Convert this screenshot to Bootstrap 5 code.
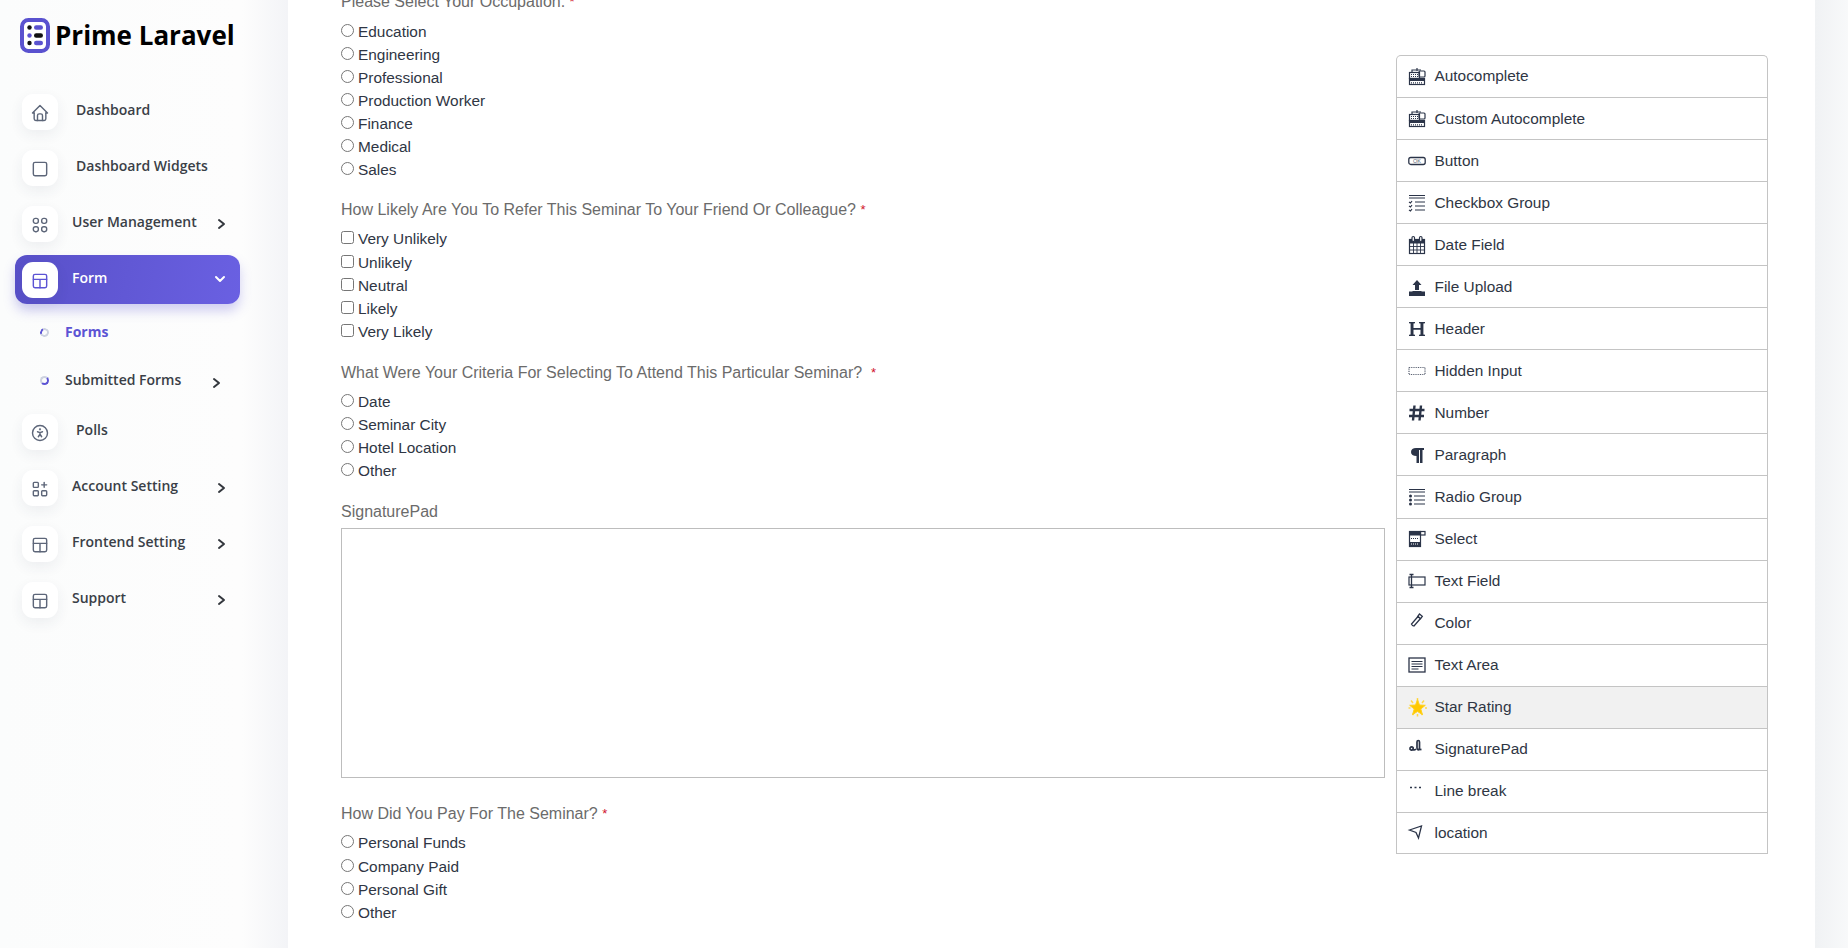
<!DOCTYPE html>
<html lang="en"><head><meta charset="utf-8"><title>Form Builder</title>
<link rel="stylesheet" href="https://cdn.jsdelivr.net/npm/bootstrap@5.3.0/dist/css/bootstrap.min.css">
<style>
html,body{height:948px;overflow:hidden;background:#f8f9fa}
.shell{height:948px;overflow:hidden}
.side{width:288px;flex:none;background:linear-gradient(to right,#fbfcfc 0,#fdfdfd 84%,#f3f4f7 100%);font-family:"Open Sans",sans-serif;font-weight:600;font-size:14px;color:#3a3f47}
.logo-row{height:87px;padding:18px 0 0 20px;gap:4px;align-items:flex-start}
.logo-txt{font-weight:700;font-size:26px;line-height:35px;color:#000}
.nav-stack{padding:0 0 0 15px;width:240px}
.nav-it{height:49px;margin-bottom:7px;padding:0 14px 0 7px;border-radius:12px}
.nav-it.on{background:linear-gradient(100deg,#5850c8,#6a60e2);color:#fff;box-shadow:0 7px 12px rgba(94,85,211,.28)}
.ico-box{width:36px;height:36px;border-radius:11px;background:#fff;box-shadow:0 5px 14px rgba(40,50,80,.07);flex:none}
.ico-box svg{width:20px;height:20px;fill:none;stroke:#5d6679;stroke-width:1.7;stroke-linecap:round;stroke-linejoin:round;margin-top:2px}
.nav-it.on .ico-box svg{stroke:#5c54d4}
.lbl-a{margin-left:18px;padding-bottom:5px}
.lbl-b{margin-left:14px;padding-bottom:5px}
.chev{width:9px;height:12px;fill:none;stroke:#33373d;stroke-width:2;stroke-linecap:round;stroke-linejoin:round;margin-left:auto}
.on .chev{width:12px;height:9px;stroke:#fff}
.sub-it{height:48px;padding:0 19px 0 25px}
.sub-it .chev{margin-top:-1px}
.ring{width:9px;height:9px;border-radius:50%;border:2px solid #cdd2e0;margin-bottom:6px;margin-right:16px;flex:none}
.ring.r1{border-left-color:#5c54d4;transform:rotate(20deg)}
.ring.r2{border-bottom-color:#5c54d4;border-right-color:#5c54d4}
.sub-tx{padding-bottom:8px}
.sub-tx.act{color:#5c54d4;font-weight:700}
.mainp{width:1527px;flex:none;background:#fff;padding-left:53px;font-family:"Liberation Sans",sans-serif;font-size:15.4px;color:#2f3644;gap:11px}
.rstrip{flex:1 1 auto;background:linear-gradient(to right,#f0f2f4,#f8f9fa)}
.fcol{width:1044px;flex:none;margin-top:-10px}
.qh{font-size:16px;line-height:24px;color:#6b6b6b;margin-bottom:5px;white-space:nowrap}
.qh b{color:#d0142c;font-weight:400;font-size:13px;vertical-align:1px}
.qh.qh1{margin-bottom:6px}
.qh.tight{margin-bottom:4px}
.opts{margin-bottom:18px}
.opts.first{margin-bottom:17px}
.opt{height:23px;gap:4px;margin:0;align-items:center}
.opt input{margin:0 0 3px 0;flex:none}
.opts.wide .opt:first-child{height:24px}
.sigbox{height:250px;border:1px solid #bdbdbd;margin-bottom:24px;background:#fff}
.lcol{width:372px;margin-top:55px;flex:none}
.tool-list{border-radius:5px 5px 0 0}
.tool-list .tool.tool{height:42.05px;padding:0 0 0 11px;gap:8.5px;border:1px solid #c4c4c4;border-bottom-width:0;color:#2f3644;font-size:15.4px;align-items:center}
.tool-list .tool.tool:last-child{border-bottom-width:1px;border-radius:0}
.tool-list .tool.hl{background:#f1f1f1}
.tool svg{width:18px;height:20px;flex:none;fill:none;stroke:#2b3448;stroke-width:1.2;overflow:visible}
.tool svg .sol{fill:#2b3448;stroke:none}
.tool svg text{font-family:"Liberation Sans",sans-serif;font-size:5.5px;fill:#5b6272;stroke:none}
.tool span{padding-bottom:1px}
</style></head>
<body>
<div class="shell d-flex">
<aside class="side">
<div class="logo-row d-flex">
<svg width="31" height="35" viewBox="0 0 31 35"><rect x="2" y="2" width="26" height="31" rx="6.500" fill="#fff" stroke="#5a52cf" stroke-width="4"/><circle cx="9.500" cy="9.500" r="2.200" fill="#111"/><rect x="14" y="7.300" width="9" height="4.400" rx="2.200" fill="#5a52cf"/><circle cx="9.500" cy="17.500" r="2.200" fill="#5a52cf"/><rect x="14" y="15.300" width="9" height="4.400" rx="2.200" fill="#111"/><circle cx="9.500" cy="25" r="2.200" fill="#111"/><rect x="14" y="22.800" width="9" height="4.400" rx="2.200" fill="#5a52cf"/></svg>
<div class="logo-txt">Prime Laravel</div>
</div>
<div class="nav-stack">
<div class="nav-it d-flex align-items-center"><div class="ico-box d-flex align-items-center justify-content-center"><svg viewBox="0 0 24 24"><path d="M5 12H3l9-9 9 9h-2"/><path d="M5 12v7a2 2 0 0 0 2 2h10a2 2 0 0 0 2-2v-7"/><path d="M9 21v-6a2 2 0 0 1 2-2h2a2 2 0 0 1 2 2v6"/></svg></div><span class="lbl-a">Dashboard</span></div>
<div class="nav-it d-flex align-items-center"><div class="ico-box d-flex align-items-center justify-content-center"><svg viewBox="0 0 24 24"><rect x="4" y="4" width="16" height="16" rx="2"/></svg></div><span class="lbl-a">Dashboard Widgets</span></div>
<div class="nav-it d-flex align-items-center"><div class="ico-box d-flex align-items-center justify-content-center"><svg viewBox="0 0 24 24"><rect x="4" y="4" width="6" height="6" rx="2.500"/><rect x="14" y="4" width="6" height="6" rx="2.500"/><rect x="4" y="14" width="6" height="6" rx="2.500"/><rect x="14" y="14" width="6" height="6" rx="2.500"/></svg></div><span class="lbl-b">User Management</span><svg class="chev" viewBox="0 0 9 12"><path d="M2 2l5 4-5 4"/></svg></div>
<div class="nav-it on d-flex align-items-center"><div class="ico-box d-flex align-items-center justify-content-center"><svg viewBox="0 0 24 24"><rect x="4" y="4" width="16" height="16" rx="2"/><path d="M4 10h16M12 10v10"/></svg></div><span class="lbl-b">Form</span><svg class="chev" viewBox="0 0 12 9"><path d="M2 2l4 4 4-4"/></svg></div>
<div class="sub-it d-flex align-items-center"><i class="ring r1"></i><span class="sub-tx act">Forms</span></div>
<div class="sub-it d-flex align-items-center"><i class="ring r2"></i><span class="sub-tx">Submitted Forms</span><svg class="chev" viewBox="0 0 9 12"><path d="M2 2l5 4-5 4"/></svg></div>
<div class="nav-it d-flex align-items-center"><div class="ico-box d-flex align-items-center justify-content-center"><svg viewBox="0 0 24 24"><circle cx="12" cy="12" r="9"/><path d="M10 16.500l2-3 2 3m-2-3v-2l3-1m-6 0l3 1"/><circle cx="12" cy="7.500" r=".5"/></svg></div><span class="lbl-a">Polls</span></div>
<div class="nav-it d-flex align-items-center"><div class="ico-box d-flex align-items-center justify-content-center"><svg viewBox="0 0 24 24"><rect x="4" y="4" width="6" height="6" rx="1"/><rect x="4" y="14" width="6" height="6" rx="1"/><rect x="14" y="14" width="6" height="6" rx="1"/><path d="M14 7h6M17 4v6"/></svg></div><span class="lbl-b">Account Setting</span><svg class="chev" viewBox="0 0 9 12"><path d="M2 2l5 4-5 4"/></svg></div>
<div class="nav-it d-flex align-items-center"><div class="ico-box d-flex align-items-center justify-content-center"><svg viewBox="0 0 24 24"><rect x="4" y="4" width="16" height="16" rx="2"/><path d="M4 10h16M12 10v10"/></svg></div><span class="lbl-b">Frontend Setting</span><svg class="chev" viewBox="0 0 9 12"><path d="M2 2l5 4-5 4"/></svg></div>
<div class="nav-it d-flex align-items-center"><div class="ico-box d-flex align-items-center justify-content-center"><svg viewBox="0 0 24 24"><rect x="4" y="4" width="16" height="16" rx="2"/><path d="M4 10h16M12 10v10"/></svg></div><span class="lbl-b">Support</span><svg class="chev" viewBox="0 0 9 12"><path d="M2 2l5 4-5 4"/></svg></div>
</div>
</aside>
<main class="mainp d-flex align-items-start">
<form class="fcol">
<div class="qh qh1">Please Select Your Occupation. <b>*</b></div>
<div class="opts first">
<label class="opt d-flex"><input type="radio" name="a">Education</label>
<label class="opt d-flex"><input type="radio" name="a">Engineering</label>
<label class="opt d-flex"><input type="radio" name="a">Professional</label>
<label class="opt d-flex"><input type="radio" name="a">Production Worker</label>
<label class="opt d-flex"><input type="radio" name="a">Finance</label>
<label class="opt d-flex"><input type="radio" name="a">Medical</label>
<label class="opt d-flex"><input type="radio" name="a">Sales</label>
</div>
<div class="qh">How Likely Are You To Refer This Seminar To Your Friend Or Colleague? <b>*</b></div>
<div class="opts wide">
<label class="opt d-flex"><input type="checkbox">Very Unlikely</label>
<label class="opt d-flex"><input type="checkbox">Unlikely</label>
<label class="opt d-flex"><input type="checkbox">Neutral</label>
<label class="opt d-flex"><input type="checkbox">Likely</label>
<label class="opt d-flex"><input type="checkbox">Very Likely</label>
</div>
<div class="qh">What Were Your Criteria For Selecting To Attend This Particular Seminar? &nbsp;<b>*</b></div>
<div class="opts">
<label class="opt d-flex"><input type="radio" name="c">Date</label>
<label class="opt d-flex"><input type="radio" name="c">Seminar City</label>
<label class="opt d-flex"><input type="radio" name="c">Hotel Location</label>
<label class="opt d-flex"><input type="radio" name="c">Other</label>
</div>
<div class="qh tight">SignaturePad</div>
<div class="sigbox"></div>
<div class="qh">How Did You Pay For The Seminar? <b>*</b></div>
<div class="opts wide">
<label class="opt d-flex"><input type="radio" name="d">Personal Funds</label>
<label class="opt d-flex"><input type="radio" name="d">Company Paid</label>
<label class="opt d-flex"><input type="radio" name="d">Personal Gift</label>
<label class="opt d-flex"><input type="radio" name="d">Other</label>
</div>
</form>
<div class="lcol">
<ul class="list-group tool-list">
<li class="list-group-item tool d-flex"><svg viewBox="0 0 18 20"><rect x="1.500" y="5.500" width="10" height="6"/><path d="M4 5V3h9M9 1v3"/><rect x="11" y="4" width="6" height="6" rx="1"/><rect x="1.500" y="11.500" width="15" height="6"/><rect class="sol" x="1" y="11" width="16" height="3"/><path d="M3 15.800h12" stroke-dasharray="1 1"/><path d="M3 7.500h7M3 9.500h7" stroke-dasharray="1 1"/></svg><span>Autocomplete</span></li>
<li class="list-group-item tool d-flex"><svg viewBox="0 0 18 20"><rect x="1.500" y="5.500" width="10" height="6"/><path d="M4 5V3h9M9 1v3"/><rect x="11" y="4" width="6" height="6" rx="1"/><rect x="1.500" y="11.500" width="15" height="6"/><rect class="sol" x="1" y="11" width="16" height="3"/><path d="M3 15.800h12" stroke-dasharray="1 1"/><path d="M3 7.500h7M3 9.500h7" stroke-dasharray="1 1"/></svg><span>Custom Autocomplete</span></li>
<li class="list-group-item tool d-flex"><svg viewBox="0 0 18 20"><rect x=".8" y="6.500" width="16.400" height="7" rx="2" stroke-width="1.300"/><text x="5" y="12">OK</text></svg><span>Button</span></li>
<li class="list-group-item tool d-flex"><svg viewBox="0 0 18 20"><path d="M1 2.500h16M1 5h16M7 9h10M7 13h10M7 17h10"/><path d="M1 9l1.500 1L4 8M1 13l1.500 1L4 12M1 17l1.500 1L4 16"/></svg><span>Checkbox Group</span></li>
<li class="list-group-item tool d-flex"><svg viewBox="0 0 18 20"><rect x="1.500" y="4.500" width="15" height="14"/><path class="sol" d="M1.500 4.500h15v4h-15z"/><path d="M1.500 11.500h15M1.500 15h15M5.500 8v10M9 8v10M12.500 8v10" stroke-width=".9"/><rect x="4" y="1.500" width="2.500" height="5" rx="1.200" fill="#fff"/><rect x="11.500" y="1.500" width="2.500" height="5" rx="1.200" fill="#fff"/></svg><span>Date Field</span></li>
<li class="list-group-item tool d-flex"><svg viewBox="0 0 18 20"><path class="sol" d="M9 3l4.500 5H11v5H7V8H4.500zM1 14.500h3.500V14h9v.5H17V19H1z"/></svg><span>File Upload</span></li>
<li class="list-group-item tool d-flex"><svg viewBox="0 0 18 20"><path class="sol" d="M1 3h6v1.200L5.500 4.600v4.300h7V4.600L11 4.200V3h6v1.200l-1.600.4v10.800l1.600.4V17h-6v-1.200l1.500-.4v-4.700h-7v4.700l1.500.4V17H1v-1.200l1.600-.4V4.600L1 4.200z"/></svg><span>Header</span></li>
<li class="list-group-item tool d-flex"><svg viewBox="0 0 18 20"><rect x="1" y="6.500" width="16" height="7" stroke="#5b6272" stroke-dasharray="1 .8"/></svg><span>Hidden Input</span></li>
<li class="list-group-item tool d-flex"><svg viewBox="0 0 18 20"><path d="M6.500 2.500L5 17.500M13 2.500l-1.500 15M1.500 7h15M1 13h15" stroke-width="2.400"/></svg><span>Number</span></li>
<li class="list-group-item tool d-flex"><svg viewBox="0 0 18 20"><path class="sol" d="M8 3h8v2h-1.500v13H12V5h-1v13H8.500v-7C5 11 3 9.500 3 7s2-4 5-4z"/></svg><span>Paragraph</span></li>
<li class="list-group-item tool d-flex"><svg viewBox="0 0 18 20"><path d="M1 2.500h16M1 5h16M6 9h11M6 13h11M6 17h11"/><circle class="sol" cx="2.500" cy="9" r="1.500"/><circle class="sol" cx="2.500" cy="13" r="1.500"/><circle class="sol" cx="2.500" cy="17" r="1.500"/></svg><span>Radio Group</span></li>
<li class="list-group-item tool d-flex"><svg viewBox="0 0 18 20"><rect x="1.500" y="2.500" width="11" height="15"/><rect x="12.500" y="2.500" width="4.500" height="3.500"/><rect class="sol" x="1.500" y="2.500" width="11" height="4"/><rect class="sol" x="1.500" y="13" width="11" height="4.500"/><path d="M3 9.500h8" stroke-dasharray="1 1"/><path d="M3 15h8" stroke="#fff" stroke-dasharray="1 1"/></svg><span>Select</span></li>
<li class="list-group-item tool d-flex"><svg viewBox="0 0 18 20"><rect x="1" y="6" width="16" height="8"/><path d="M1.500 3.500h4M3.500 3.500v13M1.500 16.500h4" stroke-width="1.300"/></svg><span>Text Field</span></li>
<li class="list-group-item tool d-flex"><svg viewBox="0 0 18 20"><path d="M3.500 14.500l-1-1.500 6.500-7.500 2.500 2-6.500 7.500zM10.500 3l2.800 2.300-1.800 2.500-2.800-2.300z" stroke-width="1.300" transform="translate(1 -2)"/></svg><span>Color</span></li>
<li class="list-group-item tool d-flex"><svg viewBox="0 0 18 20"><rect x="1" y="3" width="16" height="14" stroke-width="1.300"/><path d="M3.500 6.500h11M3.500 9h11M3.500 11.500h11M3.500 14h7"/></svg><span>Text Area</span></li>
<li class="list-group-item tool hl d-flex"><svg viewBox="0 0 18 20"><path d="M9.500 1v2.500M3 3.500L5 6M16 3.500L14 6M.5 11H2.500M19 11h-2M4.500 18l1.500-2M14.500 18l-1.500-2M9.500 19.500v-2.500" stroke="#ffd84a" stroke-width="1.500"/><path d="M9.500 2.500l2 5.500 5.800.3-4.500 3.700 1.600 5.500-4.900-3-4.900 3 1.600-5.500-4.500-3.700 5.800-.3z" fill="#ffc800" stroke="#ffd21f" stroke-width="1"/></svg><span>Star Rating</span></li>
<li class="list-group-item tool d-flex"><svg viewBox="0 0 18 20"><g transform="translate(0 -2.500)" stroke-width="1.700"><path d="M2 11.500c1.500-2 4-1 3 1s-3.500 1-3-1zM5 13c1 .8 2 .5 3-.5"/><path d="M9 5.500v6c0 1.500 1 2 2 1.500"/><path d="M9 5.500c0-2 2.500-2 2.500 0v7"/><path d="M10 13h3.500"/></g></svg><span>SignaturePad</span></li>
<li class="list-group-item tool d-flex"><svg viewBox="0 0 18 20"><path d="M2 6.500h2M6.500 6.500h2M11 6.500h2" stroke-width="1.300"/></svg><span>Line break</span></li>
<li class="list-group-item tool d-flex"><svg viewBox="0 0 18 20"><path d="M1.500 7l12-4-3 12-2.500-5.500z" stroke-width="1.300"/></svg><span>location</span></li>
</ul>
</div>
</main>
<div class="rstrip"></div>
</div>
<script src="https://cdn.jsdelivr.net/npm/bootstrap@5.3.0/dist/js/bootstrap.bundle.min.js"></script>
</body></html>
